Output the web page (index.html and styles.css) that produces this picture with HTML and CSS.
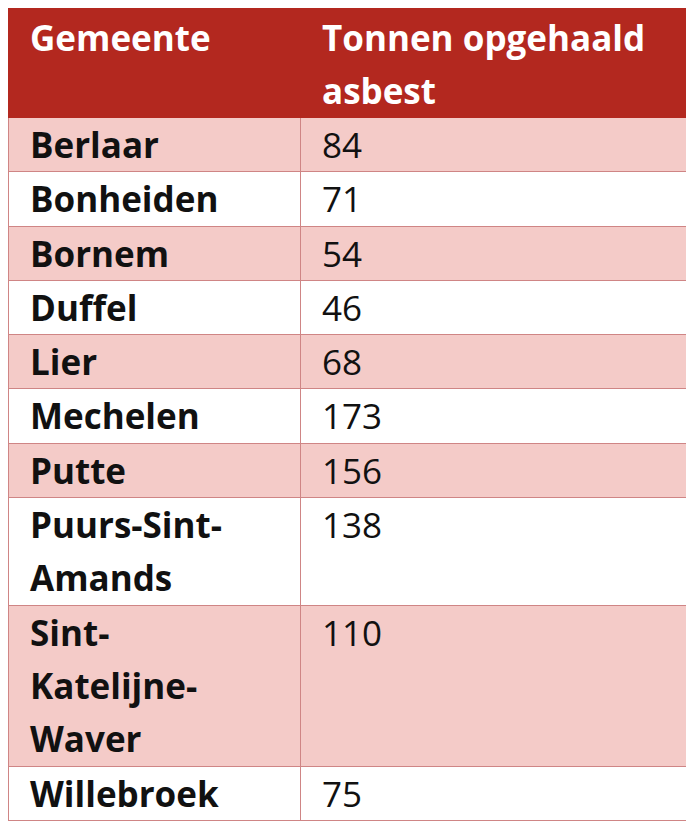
FILE: index.html
```html
<!DOCTYPE html>
<html lang="nl">
<head>
<meta charset="utf-8">
<link rel="stylesheet" href="styles.css">
</head>
<body>
<table class="tbl">
  <thead>
    <tr><th class="c1">Gemeente</th><th class="c2">Tonnen opgehaald asbest</th></tr>
  </thead>
  <tbody>
    <tr class="odd"><td class="name">Berlaar</td><td>84</td></tr>
    <tr><td class="name">Bonheiden</td><td>71</td></tr>
    <tr class="odd"><td class="name">Bornem</td><td>54</td></tr>
    <tr><td class="name">Duffel</td><td>46</td></tr>
    <tr class="odd"><td class="name">Lier</td><td>68</td></tr>
    <tr><td class="name">Mechelen</td><td>173</td></tr>
    <tr class="odd"><td class="name">Putte</td><td>156</td></tr>
    <tr><td class="name">Puurs-Sint-<br>Amands</td><td>138</td></tr>
    <tr class="odd"><td class="name">Sint-<br>Katelijne-<br>Waver</td><td>110</td></tr>
    <tr><td class="name">Willebroek</td><td>75</td></tr>
  </tbody>
</table>
</body>
</html>
```
FILE: styles.css
```css
html, body { background: #fff; }
body { margin: 8px; font-family: "Open Sans", Lato, sans-serif; color: #111; }
.tbl {
  border-collapse: collapse;
  width: 680px;
  font-size: 35px;
  line-height: 53.3px;
}
.tbl th, .tbl td {
  text-align: left;
  vertical-align: top;
  padding: 0 8px 0 21px;
  border: 1px solid #cf8585;
}
.tbl th {
  background: #b3281f;
  color: #fff;
  font-weight: 700;
  border-color: #b3281f;
  line-height: 53px;
  padding-top: 2px;
}
.tbl .c1 { width: 262px; }
.tbl td { background: #fff; font-weight: 400; }
.tbl tr.odd td { background: #f4cbc8; }
.tbl td.name { font-weight: 700; }
```
